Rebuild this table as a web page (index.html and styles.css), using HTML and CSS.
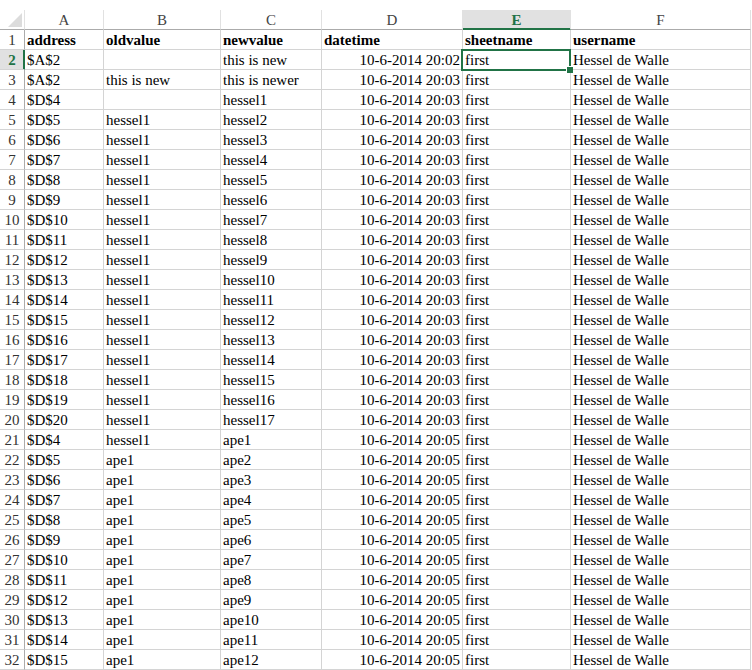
FILE: index.html
```html
<!DOCTYPE html>
<html>
<head>
<meta charset="utf-8">
<link rel="stylesheet" href="styles.css">
</head>
<body>
<div class="sheet">
  <div class="ch corner"><span class="tri"></span></div>
  <div class="ch">A</div><div class="ch">B</div><div class="ch">C</div><div class="ch">D</div><div class="ch sel">E</div><div class="ch">F</div>

  <div class="rh">1</div><div class="c b">address</div><div class="c b">oldvalue</div><div class="c b">newvalue</div><div class="c b">datetime</div><div class="c b">sheetname</div><div class="c b">username</div>
  <div class="rh sel">2</div><div class="c">$A$2</div><div class="c"></div><div class="c">this is new</div><div class="c r">10-6-2014 20:02</div><div class="c">first</div><div class="c">Hessel de Walle</div>
  <div class="rh">3</div><div class="c">$A$2</div><div class="c">this is new</div><div class="c">this is newer</div><div class="c r">10-6-2014 20:03</div><div class="c">first</div><div class="c">Hessel de Walle</div>
  <div class="rh">4</div><div class="c">$D$4</div><div class="c"></div><div class="c">hessel1</div><div class="c r">10-6-2014 20:03</div><div class="c">first</div><div class="c">Hessel de Walle</div>
  <div class="rh">5</div><div class="c">$D$5</div><div class="c">hessel1</div><div class="c">hessel2</div><div class="c r">10-6-2014 20:03</div><div class="c">first</div><div class="c">Hessel de Walle</div>
  <div class="rh">6</div><div class="c">$D$6</div><div class="c">hessel1</div><div class="c">hessel3</div><div class="c r">10-6-2014 20:03</div><div class="c">first</div><div class="c">Hessel de Walle</div>
  <div class="rh">7</div><div class="c">$D$7</div><div class="c">hessel1</div><div class="c">hessel4</div><div class="c r">10-6-2014 20:03</div><div class="c">first</div><div class="c">Hessel de Walle</div>
  <div class="rh">8</div><div class="c">$D$8</div><div class="c">hessel1</div><div class="c">hessel5</div><div class="c r">10-6-2014 20:03</div><div class="c">first</div><div class="c">Hessel de Walle</div>
  <div class="rh">9</div><div class="c">$D$9</div><div class="c">hessel1</div><div class="c">hessel6</div><div class="c r">10-6-2014 20:03</div><div class="c">first</div><div class="c">Hessel de Walle</div>
  <div class="rh">10</div><div class="c">$D$10</div><div class="c">hessel1</div><div class="c">hessel7</div><div class="c r">10-6-2014 20:03</div><div class="c">first</div><div class="c">Hessel de Walle</div>
  <div class="rh">11</div><div class="c">$D$11</div><div class="c">hessel1</div><div class="c">hessel8</div><div class="c r">10-6-2014 20:03</div><div class="c">first</div><div class="c">Hessel de Walle</div>
  <div class="rh">12</div><div class="c">$D$12</div><div class="c">hessel1</div><div class="c">hessel9</div><div class="c r">10-6-2014 20:03</div><div class="c">first</div><div class="c">Hessel de Walle</div>
  <div class="rh">13</div><div class="c">$D$13</div><div class="c">hessel1</div><div class="c">hessel10</div><div class="c r">10-6-2014 20:03</div><div class="c">first</div><div class="c">Hessel de Walle</div>
  <div class="rh">14</div><div class="c">$D$14</div><div class="c">hessel1</div><div class="c">hessel11</div><div class="c r">10-6-2014 20:03</div><div class="c">first</div><div class="c">Hessel de Walle</div>
  <div class="rh">15</div><div class="c">$D$15</div><div class="c">hessel1</div><div class="c">hessel12</div><div class="c r">10-6-2014 20:03</div><div class="c">first</div><div class="c">Hessel de Walle</div>
  <div class="rh">16</div><div class="c">$D$16</div><div class="c">hessel1</div><div class="c">hessel13</div><div class="c r">10-6-2014 20:03</div><div class="c">first</div><div class="c">Hessel de Walle</div>
  <div class="rh">17</div><div class="c">$D$17</div><div class="c">hessel1</div><div class="c">hessel14</div><div class="c r">10-6-2014 20:03</div><div class="c">first</div><div class="c">Hessel de Walle</div>
  <div class="rh">18</div><div class="c">$D$18</div><div class="c">hessel1</div><div class="c">hessel15</div><div class="c r">10-6-2014 20:03</div><div class="c">first</div><div class="c">Hessel de Walle</div>
  <div class="rh">19</div><div class="c">$D$19</div><div class="c">hessel1</div><div class="c">hessel16</div><div class="c r">10-6-2014 20:03</div><div class="c">first</div><div class="c">Hessel de Walle</div>
  <div class="rh">20</div><div class="c">$D$20</div><div class="c">hessel1</div><div class="c">hessel17</div><div class="c r">10-6-2014 20:03</div><div class="c">first</div><div class="c">Hessel de Walle</div>
  <div class="rh">21</div><div class="c">$D$4</div><div class="c">hessel1</div><div class="c">ape1</div><div class="c r">10-6-2014 20:05</div><div class="c">first</div><div class="c">Hessel de Walle</div>
  <div class="rh">22</div><div class="c">$D$5</div><div class="c">ape1</div><div class="c">ape2</div><div class="c r">10-6-2014 20:05</div><div class="c">first</div><div class="c">Hessel de Walle</div>
  <div class="rh">23</div><div class="c">$D$6</div><div class="c">ape1</div><div class="c">ape3</div><div class="c r">10-6-2014 20:05</div><div class="c">first</div><div class="c">Hessel de Walle</div>
  <div class="rh">24</div><div class="c">$D$7</div><div class="c">ape1</div><div class="c">ape4</div><div class="c r">10-6-2014 20:05</div><div class="c">first</div><div class="c">Hessel de Walle</div>
  <div class="rh">25</div><div class="c">$D$8</div><div class="c">ape1</div><div class="c">ape5</div><div class="c r">10-6-2014 20:05</div><div class="c">first</div><div class="c">Hessel de Walle</div>
  <div class="rh">26</div><div class="c">$D$9</div><div class="c">ape1</div><div class="c">ape6</div><div class="c r">10-6-2014 20:05</div><div class="c">first</div><div class="c">Hessel de Walle</div>
  <div class="rh">27</div><div class="c">$D$10</div><div class="c">ape1</div><div class="c">ape7</div><div class="c r">10-6-2014 20:05</div><div class="c">first</div><div class="c">Hessel de Walle</div>
  <div class="rh">28</div><div class="c">$D$11</div><div class="c">ape1</div><div class="c">ape8</div><div class="c r">10-6-2014 20:05</div><div class="c">first</div><div class="c">Hessel de Walle</div>
  <div class="rh">29</div><div class="c">$D$12</div><div class="c">ape1</div><div class="c">ape9</div><div class="c r">10-6-2014 20:05</div><div class="c">first</div><div class="c">Hessel de Walle</div>
  <div class="rh">30</div><div class="c">$D$13</div><div class="c">ape1</div><div class="c">ape10</div><div class="c r">10-6-2014 20:05</div><div class="c">first</div><div class="c">Hessel de Walle</div>
  <div class="rh">31</div><div class="c">$D$14</div><div class="c">ape1</div><div class="c">ape11</div><div class="c r">10-6-2014 20:05</div><div class="c">first</div><div class="c">Hessel de Walle</div>
  <div class="rh">32</div><div class="c">$D$15</div><div class="c">ape1</div><div class="c">ape12</div><div class="c r">10-6-2014 20:05</div><div class="c">first</div><div class="c">Hessel de Walle</div>

  <div class="selbox"></div>
  <div class="handle"></div>
</div>
</body>
</html>
```
FILE: styles.css
```css
html, body {
  margin: 0;
  padding: 0;
  background: #fff;
}
body {
  font-family: "Liberation Serif", "Times New Roman", serif;
  font-size: 15px;
  color: #000;
  overflow: hidden;
}
.sheet {
  position: relative;
  margin-top: 10px;
  display: grid;
  grid-template-columns: 25px 79px 117px 101px 141px 108px 180px;
  grid-auto-rows: 20px;
  width: 751px;
}
.ch, .rh, .c {
  box-sizing: border-box;
  height: 20px;
  padding-top: 1px;
  line-height: 19px;
  white-space: nowrap;
  overflow: hidden;
}
.ch {
  text-align: center;
  color: #444;
  border-right: 1px solid #e1e1e1;
  border-bottom: 1px solid #ababab;
}
.ch.corner {
  position: relative;
  border-right: 1px solid #e1e1e1;
}
.tri {
  position: absolute;
  right: 2px;
  bottom: 2px;
  width: 0;
  height: 0;
  border-left: 14px solid transparent;
  border-bottom: 14px solid #dcdcdc;
}
.ch.sel {
  background: #e1e1e1;
  color: #217346;
  font-weight: bold;
  border-bottom: 1px solid #217346;
  box-shadow: inset 0 -1px 0 #217346;
}
.rh {
  text-align: center;
  color: #333;
  border-right: 1px solid #ababab;
  border-bottom: 1px solid #d4d4d4;
}
.rh.sel {
  background: #e1e1e1;
  color: #217346;
  font-weight: bold;
  border-right: 1px solid #217346;
  box-shadow: inset -1px 0 0 #217346;
}
.c {
  padding-left: 2px;
  padding-right: 2px;
  border-right: 1px solid #d4d4d4;
  border-bottom: 1px solid #d4d4d4;
}
.c.b {
  font-weight: bold;
}
.c.r {
  text-align: right;
}
.selbox {
  position: absolute;
  left: 461px;
  top: 39px;
  width: 110px;
  height: 22px;
  border: 2px solid #217346;
  box-sizing: border-box;
}
.handle {
  position: absolute;
  left: 566px;
  top: 56px;
  width: 7px;
  height: 7px;
  background: #217346;
  border-top: 1px solid #fff;
  border-left: 1px solid #fff;
  box-sizing: border-box;
}
```
